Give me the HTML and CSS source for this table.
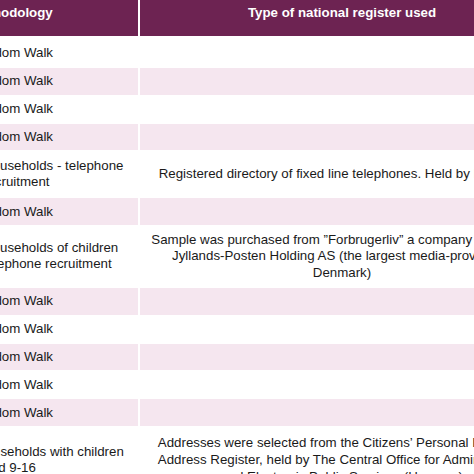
FILE: index.html
```html
<!DOCTYPE html>
<html lang="en">
<head>
<meta charset="utf-8">
<title>Sampling methodology</title>
<link rel="stylesheet" href="styles.css">
</head>
<body>
<div class="frame">
  <table class="reg">
    <thead>
      <tr>
        <th class="c-method">Methodology</th>
        <th class="c-register">Type of national register used</th>
      </tr>
    </thead>
    <tbody>
      <tr><td class="c-method">Random Walk</td><td class="c-register"></td></tr>
      <tr class="alt"><td class="c-method">Random Walk</td><td class="c-register"></td></tr>
      <tr><td class="c-method">Random Walk</td><td class="c-register"></td></tr>
      <tr class="alt"><td class="c-method">Random Walk</td><td class="c-register"></td></tr>
      <tr class="roomy"><td class="c-method sub">Households - telephone recruitment</td><td class="c-register">Registered directory of fixed line telephones. Held by Krak A/S</td></tr>
      <tr class="alt"><td class="c-method">Random Walk</td><td class="c-register"></td></tr>
      <tr><td class="c-method sub">Households of children telephone recruitment</td><td class="c-register">Sample was purchased from ”Forbrugerliv” a company owned by Jyllands-Posten Holding AS (the largest media-provider in Denmark)</td></tr>
      <tr class="alt"><td class="c-method">Random Walk</td><td class="c-register"></td></tr>
      <tr><td class="c-method">Random Walk</td><td class="c-register"></td></tr>
      <tr class="alt"><td class="c-method">Random Walk</td><td class="c-register"></td></tr>
      <tr><td class="c-method">Random Walk</td><td class="c-register"></td></tr>
      <tr class="alt"><td class="c-method">Random Walk</td><td class="c-register"></td></tr>
      <tr class="tall"><td class="c-method sub2">Households with children aged 9-16</td><td class="c-register">Addresses were selected from the Citizens’ Personal Data and Address Register, held by The Central Office for Administrative and Electronic Public Services (Hungary)</td></tr>
    </tbody>
  </table>
</div>
</body>
</html>
```

FILE: styles.css
```css
html, body {
  margin: 0;
  padding: 0;
  background: #ffffff;
}

.frame {
  width: 474px;
  height: 474px;
  overflow: hidden;
}

.reg {
  margin-top: -10px;
  margin-left: -40px;
  border-collapse: separate;
  border-spacing: 2px 1px;
  table-layout: fixed;
  width: 584px;
  font-family: "Liberation Sans", Arial, sans-serif;
  font-size: 13.3px;
  line-height: 16.6px;
  color: #1a1a1a;
}

.reg th {
  background: #6d2352;
  background-clip: padding-box;
  color: #ffffff;
  font-weight: bold;
  padding: 14px 8px;
  border-bottom: 3px solid #ffffff;
  vertical-align: middle;
}

.reg td {
  padding: 5.2px 8px;
  vertical-align: middle;
}

.reg .c-method {
  width: 176px;
  box-sizing: border-box;
  text-align: left;
}

.reg .c-register {
  width: 404px;
  box-sizing: border-box;
  text-align: center;
  padding-left: 6px;
  padding-right: 6px;
}

.reg td.sub {
  padding-left: 21px;
}

.reg td.sub2 {
  padding-left: 14px;
}

.reg tr.roomy td {
  padding-top: 6.4px;
  padding-bottom: 6.4px;
}

.reg tr.tall td {
  padding-top: 8px;
  padding-bottom: 8px;
}

.reg tr.alt td {
  background: #f5e6ef;
}
```
